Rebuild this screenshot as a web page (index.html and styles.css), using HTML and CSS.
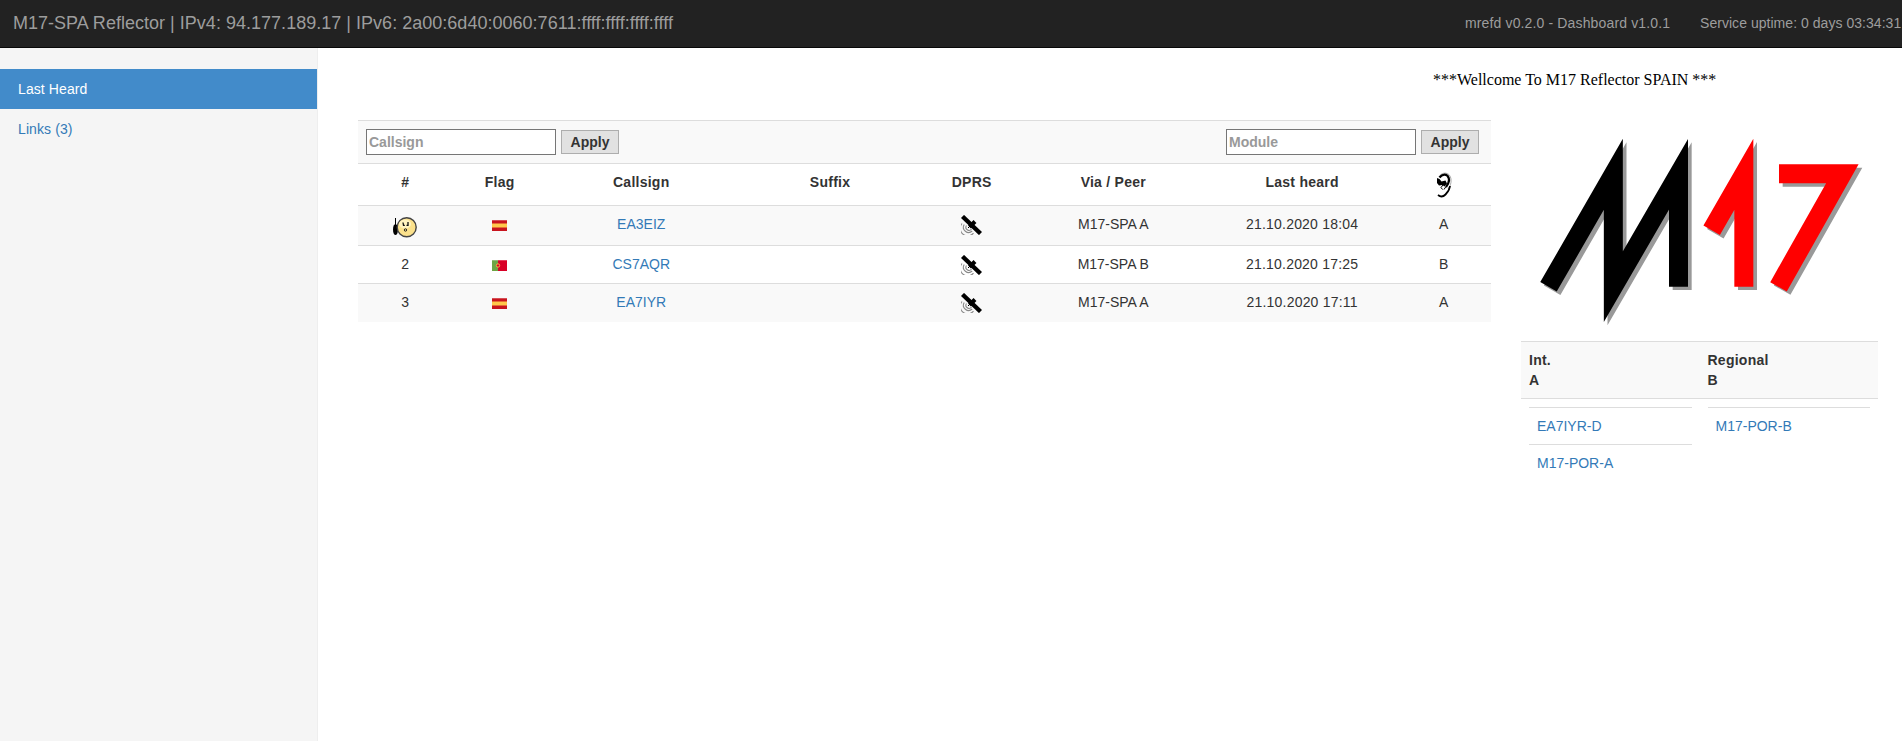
FILE: index.html
```html
<!DOCTYPE html>
<html lang="en">
<head>
    <meta charset="UTF-8">
    <meta name="viewport" content="width=device-width, initial-scale=1.0">
    <title>M17-SPA Reflector Dashboard</title>
    <link rel="stylesheet" href="styles.css">
</head>
<body>
    <!-- shared icons -->
    <svg class="defs" width="0" height="0">
        <symbol id="sat" viewBox="0 0 21 20">
            <g fill="none" stroke="#888" stroke-width="1.100">
                <path d="M5.500 10.500a3 3 0 0 0 5 3.500"/>
                <path d="M3.200 9.500a5.200 5.200 0 0 0 8 6.500"/>
                <path d="M1 8.500a7.500 7.500 0 0 0 11.500 9.700"/>
            </g>
            <path d="M1.500 1.500L19.500 18.500" stroke="#000" stroke-width="4.400"/>
            <path d="M8.500 12L14 6.500" stroke="#000" stroke-width="4"/>
            <path d="M7 13l3-3" stroke="#000" stroke-width="1"/>
        </symbol>
        <symbol id="es" viewBox="0 0 15 11">
            <rect width="15" height="11" fill="#c8141e"/>
            <rect y="3.500" width="15" height="4" fill="#ffc84b"/>
            <rect width="15" height="1" fill="#fff" opacity=".25"/>
        </symbol>
        <symbol id="pt" viewBox="0 0 15 11">
            <rect width="15" height="11" fill="#d80027"/>
            <rect width="6" height="11" fill="#6da544"/>
            <circle cx="6" cy="5.500" r="1.700" fill="#d80027" stroke="#f0b43c" stroke-width="1"/>
            <rect width="15" height="1" fill="#fff" opacity=".25"/>
        </symbol>
    </svg>

    <nav class="navbar">
        <span class="brand">M17-SPA Reflector | IPv4: 94.177.189.17 | IPv6: 2a00:6d40:0060:7611:ffff:ffff:ffff:ffff</span>
        <span class="version">mrefd v0.2.0 - Dashboard v1.0.1</span>
        <span class="uptime">Service uptime: 0 days 03:34:31</span>
    </nav>

    <div class="page">
        <div class="sidebar">
            <a class="active" href="#">Last Heard</a>
            <a href="#">Links (3)</a>
        </div>

        <div class="content">
            <div class="welcome">***Wellcome To M17 Reflector SPAIN ***</div>
            <div class="columns">
                <div class="main">
                    <table class="table heard">
                        <colgroup>
                            <col class="w1">
                            <col class="w1">
                            <col class="w2">
                            <col class="w2">
                            <col class="w1">
                            <col class="w2">
                            <col class="w2">
                            <col class="w1">
                        </colgroup>
                        <tr class="filter">
                            <th colspan="8">
                                <div class="filter-row">
                                    <form><input type="text" placeholder="Callsign"><button type="button">Apply</button></form>
                                    <form><input type="text" placeholder="Module"><button type="button">Apply</button></form>
                                </div>
                            </th>
                        </tr>
                        <tr class="head">
                            <th>#</th>
                            <th>Flag</th>
                            <th>Callsign</th>
                            <th>Suffix</th>
                            <th>DPRS</th>
                            <th>Via / Peer</th>
                            <th>Last heard</th>
                            <th>
                                <svg class="ear" viewBox="0 0 16 26">
                                    <path d="M3 5C5 0 14-1 15 7c.500 5-1 7-3 10" fill="none" stroke="#aaa" stroke-width="1"/>
                                    <path d="M3.500 5.500C6 2 11 1.500 12.500 5.500s0 6.500-2.500 9.500" fill="none" stroke="#000" stroke-width="2.200"/>
                                    <path d="M1 6l2.500 1 2 2.500 4-1 1.500 3-2.500 3-2-1.500-3.500.500L1 11z"/>
                                    <path d="M7 13l-2 2.500 1.500 2M10 14.500l-2 3" fill="none" stroke="#000" stroke-width="1"/>
                                    <path d="M14 14c-.500 4-2 6-4.500 8.500-2 2-5 2.500-7.500 .500" fill="none" stroke="#000" stroke-width="1.800"/>
                                </svg>
                            </th>
                        </tr>
                        <tr class="first">
                            <td>
                                <svg class="face" viewBox="0 0 24 21">
                                    <path d="M2.500 1v8" stroke="#000" stroke-width="1"/>
                                    <ellipse cx="2.500" cy="12.500" rx="2.500" ry="5.500"/>
                                    <circle cx="13.700" cy="10.300" r="9.500" fill="#fbe18c" stroke="#444" stroke-width="1.400"/>
                                    <ellipse cx="12" cy="7" rx="6" ry="4.500" fill="#fff3c0"/>
                                    <path d="M10 5.500l.500 2.800h1.300M15 5v3.300h-1.500" fill="none" stroke="#111" stroke-width="1.300"/>
                                    <circle cx="12.500" cy="13" r="1.200" fill="none" stroke="#222" stroke-width="1"/>
                                </svg>
                            </td>
                            <td><svg class="flag"><use href="#es"/></svg></td>
                            <td><a href="#">EA3EIZ</a></td>
                            <td></td>
                            <td><svg class="sat"><use href="#sat"/></svg></td>
                            <td>M17-SPA A</td>
                            <td class="time">21.10.2020 18:04</td>
                            <td>A</td>
                        </tr>
                        <tr class="second">
                            <td>2</td>
                            <td><svg class="flag"><use href="#pt"/></svg></td>
                            <td><a href="#">CS7AQR</a></td>
                            <td></td>
                            <td><svg class="sat"><use href="#sat"/></svg></td>
                            <td>M17-SPA B</td>
                            <td class="time">21.10.2020 17:25</td>
                            <td>B</td>
                        </tr>
                        <tr class="third">
                            <td>3</td>
                            <td><svg class="flag"><use href="#es"/></svg></td>
                            <td><a href="#">EA7IYR</a></td>
                            <td></td>
                            <td><svg class="sat"><use href="#sat"/></svg></td>
                            <td>M17-SPA A</td>
                            <td class="time">21.10.2020 17:11</td>
                            <td>A</td>
                        </tr>
                    </table>
                </div>

                <div class="side">
                    <svg class="logo" viewBox="33 0 1071 693">
                        <g fill="none" stroke-width="57" stroke-miterlimit="10">
                            <g stroke="#999" transform="translate(11 10)">
                                <path d="M115.500 530.500L310 193V530L505.500 193V530"/>
                                <path d="M605 361L701.500 193V530"/>
                                <path d="M807 191.500H997L805.500 530.500"/>
                            </g>
                            <path stroke="#000" d="M115.500 530.500L310 193V530L505.500 193V530"/>
                            <path stroke="#f00" d="M605 361L701.500 193V530"/>
                            <path stroke="#f00" d="M807 191.500H997L805.500 530.500"/>
                        </g>
                    </svg>
                    <table class="table modules">
                        <tr>
                            <th>Int.<br>A</th>
                            <th>Regional<br>B</th>
                        </tr>
                        <tr>
                            <td>
                                <table class="table">
                                    <tr><td><a href="#">EA7IYR-D</a></td></tr>
                                    <tr><td><a href="#">M17-POR-A</a></td></tr>
                                </table>
                            </td>
                            <td>
                                <table class="table">
                                    <tr><td><a href="#">M17-POR-B</a></td></tr>
                                </table>
                            </td>
                        </tr>
                    </table>
                </div>
            </div>
        </div>
    </div>
</body>
</html>
```
FILE: styles.css
```css
* {
    box-sizing: border-box;
}
body {
    margin: 0;
    height: 100vh;
    display: flex;
    flex-direction: column;
    overflow: hidden;
    font-family: "Liberation Sans", Arial, sans-serif;
    font-size: 14px;
    line-height: 20px;
    color: #333;
    background: #fff;
}
a {
    color: #337ab7;
    text-decoration: none;
}
.defs {
    position: absolute;
}
.navbar {
    display: flex;
    align-items: center;
    flex: none;
    height: 48px;
    padding: 0 0 2px 13px;
    background: #222;
    border-bottom: 1px solid #080808;
    color: #9d9d9d;
    white-space: nowrap;
}
.brand {
    font-size: 18px;
    letter-spacing: 0.02px;
    margin-right: auto;
}
.version {
    width: 235px;
    letter-spacing: 0.14px;
}
.uptime {
    width: 202px;
    letter-spacing: 0.04px;
}
.page {
    display: flex;
    flex: 1;
}
.sidebar {
    width: 318px;
    padding-top: 21px;
    background: #f5f5f5;
    border-right: 1px solid #eee;
}
.sidebar a {
    display: block;
    padding: 10px 18px;
    letter-spacing: 0.1px;
}
.sidebar .active {
    background: #428bca;
    color: #fff;
}
.content {
    width: 1584px;
}
.welcome {
    height: 62px;
    padding: 22px 0 0 1115px;
    font-family: "Liberation Serif", "Times New Roman", serif;
    font-size: 16px;
    color: #000;
}
.columns {
    display: flex;
}
.main {
    width: 1173px;
    padding: 10px 0 0 40px;
}
.table {
    width: 100%;
    border-collapse: separate;
    border-spacing: 0;
    table-layout: fixed;
}
.table th,
.table td {
    padding: 8px;
    border-top: 1px solid #ddd;
    vertical-align: top;
    text-align: left;
}
.table th {
    letter-spacing: 0.25px;
}
.w1 {
    width: 8.333%;
}
.w2 {
    width: 16.667%;
}
.heard tr:nth-child(odd) {
    background: #f9f9f9;
}
.heard th,
.heard td {
    text-align: center;
}
.filter {
    height: 43px;
}
.head {
    height: 42px;
}
.first {
    height: 40px;
}
.second {
    height: 38px;
}
.third {
    height: 39px;
}
.heard .head th,
.heard td {
    padding-bottom: 0;
}
.filter-row {
    display: flex;
    justify-content: space-between;
    padding-right: 4px;
}
.filter-row form {
    display: flex;
    align-items: center;
    gap: 5px;
}
.filter-row input {
    width: 190px;
    height: 26px;
    padding: 1px 2px;
    border: 1px solid #767676;
    font: inherit;
}
.filter-row input::placeholder {
    color: #999;
}
.filter-row button {
    width: 58px;
    height: 24px;
    padding: 0;
    border: 1px solid #adadad;
    background: #e1e1e1;
    color: #333;
    font: inherit;
}
.heard svg {
    display: block;
    margin: 0 auto;
}
.heard .ear {
    width: 16px;
    height: 26px;
}
.heard .face {
    width: 24px;
    height: 21px;
    margin-top: 3px;
}
.heard .flag {
    width: 15px;
    height: 11px;
    margin-top: 6px;
}
.heard .sat {
    width: 21px;
    height: 20px;
    margin-top: 1px;
}
.time {
    letter-spacing: 0.2px;
}
.side {
    width: 387px;
    padding-left: 30px;
}
.logo {
    display: block;
    width: 357px;
    height: 231px;
}
.modules tr:first-child th {
    background: #f9f9f9;
}
```
